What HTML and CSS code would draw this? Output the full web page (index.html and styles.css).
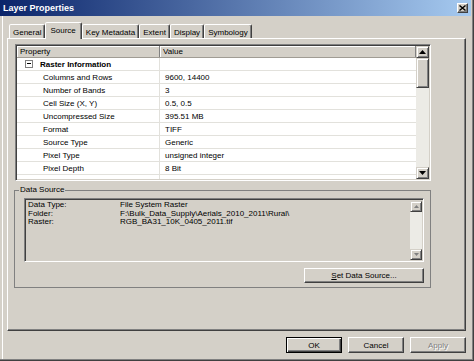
FILE: index.html
```html
<!DOCTYPE html>
<html>
<head>
<meta charset="utf-8">
<link rel="stylesheet" href="styles.css">
</head>
<body>
<div class="window">
  <div class="titlebar">
    <span class="title">Layer Properties</span>
    <span class="close"><svg width="7" height="6" viewBox="0 0 7 6"><path d="M0.5 0.5 L6.5 5.5 M6.5 0.5 L0.5 5.5" stroke="#000" stroke-width="1.4"/></svg></span>
  </div>
  <div class="content">
    <div class="tabs">
      <div class="tab">General</div>
      <div class="tab active">Source</div>
      <div class="tab">Key Metadata</div>
      <div class="tab">Extent</div>
      <div class="tab">Display</div>
      <div class="tab">Symbology</div>
    </div>
    <div class="panel">
      <div class="grid">
        <div class="grid-main">
          <div class="grow head"><div class="c1">Property</div><div class="c2">Value</div></div>
          <div class="grow group"><div class="c1"><span class="minus"></span><b>Raster Information</b></div><div class="c2"></div></div>
          <div class="grow"><div class="c1">Columns and Rows</div><div class="c2">9600, 14400</div></div>
          <div class="grow"><div class="c1">Number of Bands</div><div class="c2">3</div></div>
          <div class="grow"><div class="c1">Cell Size (X, Y)</div><div class="c2">0.5, 0.5</div></div>
          <div class="grow"><div class="c1">Uncompressed Size</div><div class="c2">395.51 MB</div></div>
          <div class="grow"><div class="c1">Format</div><div class="c2">TIFF</div></div>
          <div class="grow"><div class="c1">Source Type</div><div class="c2">Generic</div></div>
          <div class="grow"><div class="c1">Pixel Type</div><div class="c2">unsigned integer</div></div>
          <div class="grow"><div class="c1">Pixel Depth</div><div class="c2">8 Bit</div></div>
          <div class="grow"><div class="c1">NoData Value</div><div class="c2"></div></div>
        </div>
        <div class="vscroll">
          <div class="sbtn"><svg width="7" height="4" viewBox="0 0 7 4"><path d="M3.5 0 L7 4 L0 4 Z" fill="#000"/></svg></div>
          <div class="thumb"></div>
          <div class="track"></div>
          <div class="sbtn"><svg width="7" height="4" viewBox="0 0 7 4"><path d="M0 0 L7 0 L3.5 4 Z" fill="#000"/></svg></div>
        </div>
      </div>
      <fieldset class="groupbox">
        <legend>Data Source</legend>
        <div class="textbox">
          <div class="tb-text">
            <div class="tb-row"><span class="tb-label">Data Type:</span><span>File System Raster</span></div>
            <div class="tb-row"><span class="tb-label">Folder:</span><span>F:\Bulk_Data_Supply\Aerials_2010_2011\Rural\</span></div>
            <div class="tb-row"><span class="tb-label">Raster:</span><span>RGB_BA31_10K_0405_2011.tif</span></div>
          </div>
          <div class="vscroll small">
            <div class="sbtn"><svg width="5" height="3" viewBox="0 0 5 3"><path d="M2.5 0 L5 3 L0 3 Z" fill="#808080"/></svg></div>
            <div class="track"></div>
            <div class="sbtn"><svg width="5" height="3" viewBox="0 0 5 3"><path d="M0 0 L5 0 L2.5 3 Z" fill="#808080"/></svg></div>
          </div>
        </div>
        <div class="gb-actions">
          <button class="btn wide"><u>S</u>et Data Source...</button>
        </div>
      </fieldset>
    </div>
    <div class="footer">
      <button class="btn default">OK</button>
      <button class="btn">Cancel</button>
      <button class="btn" disabled>Apply</button>
    </div>
  </div>
</div>
</body>
</html>
```
FILE: styles.css
```css
* { box-sizing: border-box; }
body {
  margin: 0;
  font-family: "Liberation Sans", Arial, sans-serif;
  font-size: 8px;
  color: #000;
  background: #d4d0c8;
}
.window {
  width: 474px;
  height: 361px;
  background: #d4d0c8;
  display: flex;
  flex-direction: column;
  border-right: 1px solid #404040;
  border-bottom: 1px solid #404040;
  box-shadow: inset -1px -1px #808080, inset 2px 0 #d4d0c8, inset 3px 0 #fff;
  padding: 0 2px 2px 0;
  overflow: hidden;
}
.titlebar {
  height: 16px;
  flex: none;
  background: linear-gradient(to right, #0a246a, #a6caf0);
  color: #fff;
  font-weight: bold;
  font-size: 9px;
  display: flex;
  align-items: center;
  justify-content: space-between;
  padding: 0 3px 0 3px;
}
.close {
  width: 11px;
  height: 10px;
  background: #d4d0c8;
  border: 1px solid;
  border-color: #fff #404040 #404040 #fff;
  box-shadow: inset -1px -1px #808080;
  display: flex;
  align-items: center;
  justify-content: center;
}
.close svg { display: block; }
.content {
  flex: 1;
  display: flex;
  flex-direction: column;
  padding: 0 5px 0 7px;
}
.tabs {
  display: flex;
  align-items: flex-end;
  height: 16px;
  margin-top: 6px;
  padding-left: 2px;
  position: relative;
  z-index: 1;
}
.tab {
  height: 14px;
  padding: 1px 3px 0;
  border: 1px solid;
  border-bottom: none;
  border-color: #fff #404040 transparent #fff;
  box-shadow: inset -1px 0 #808080;
  border-radius: 2px 2px 0 0;
  display: flex;
  align-items: center;
  white-space: nowrap;
  background: #d4d0c8;
}
.tab.active {
  height: 17px;
  margin-bottom: -1px;
  padding: 0 5px 1px 4px;
}
.panel {
  height: 293px;
  flex: none;
  border: 1px solid;
  border-color: #fff #404040 #404040 #fff;
  box-shadow: inset -1px -1px #808080;
  padding: 5px 7px 0 6px;
  display: flex;
  flex-direction: column;
}
.grid {
  width: 416px;
  height: 137px;
  margin-left: 1px;
  border: 1px solid;
  border-color: #808080 #fff #fff #808080;
  box-shadow: inset 1px 1px #404040, inset -1px -1px #d4d0c8;
  padding: 1px;
  display: flex;
  background: #fff;
}
.grid-main {
  flex: 1;
  overflow: hidden;
}
.grow {
  display: flex;
  height: 13px;
  border-bottom: 1px solid #e2e1dc;
  white-space: nowrap;
}
.grow .c1 {
  width: 143px;
  flex: none;
  border-right: 1px solid #e2e1dc;
  padding-left: 26px;
  display: flex;
  align-items: center;
}
.grow .c2 {
  flex: 1;
  padding-left: 5px;
  display: flex;
  align-items: center;
}
.grow.head {
  height: 12px;
  background: #d4d0c8;
  border-bottom: 1px solid #a09c94;
}
.grow.head .c1, .grow.head .c2 {
  box-shadow: inset 1px 1px #fff;
  border-right: 1px solid #808080;
}
.grow.head .c1 { padding-left: 3px; }
.grow.head .c2 { padding-left: 3px; }
.grow.group .c1 { padding-left: 8px; }
.minus {
  width: 8px;
  height: 8px;
  border: 1px solid #808080;
  background: #fff;
  margin-right: 7px;
  position: relative;
  flex: none;
}
.minus::after {
  content: "";
  position: absolute;
  left: 1px;
  right: 1px;
  top: 2px;
  height: 1px;
  background: #000;
}
.vscroll {
  width: 13px;
  flex: none;
  display: flex;
  flex-direction: column;
  background: #ecebe6;
}
.sbtn, .thumb {
  height: 12px;
  flex: none;
  background: #d4d0c8;
  border: 1px solid;
  border-color: #d4d0c8 #404040 #404040 #d4d0c8;
  box-shadow: inset 1px 1px #fff, inset -1px -1px #808080;
  display: flex;
  align-items: center;
  justify-content: center;
}
.sbtn svg { display: block; }
.thumb { height: 30px; }
.track { flex: 1; }
.groupbox {
  width: 417px;
  margin: 4px 0 0 0;
  padding: 3px 6px 4px 9px;
  border: 1px solid #808080;
  min-width: 0;
}
.groupbox legend {
  padding: 0 1px;
  margin-left: -5px;
  line-height: 10px;
}
.textbox {
  width: 400px;
  height: 64px;
  border: 1px solid;
  border-color: #808080 #fff #fff #808080;
  box-shadow: inset 1px 1px #404040, inset -1px -1px #d4d0c8;
  padding: 1px;
  display: flex;
  background: #d4d0c8;
}
.tb-text {
  flex: 1;
  padding: 1px 0 0 2px;
  line-height: 8.5px;
}
.tb-row { display: flex; white-space: nowrap; }
.tb-label { width: 92px; flex: none; }
.vscroll.small {
  width: 12px;
  margin-top: 1px;
}
.vscroll.small .sbtn { height: 11px; }
.gb-actions {
  display: flex;
  justify-content: flex-end;
  margin-top: 6px;
  width: 400px;
}
.btn {
  font-family: "Liberation Sans", Arial, sans-serif;
  font-size: 8px;
  color: #000;
  height: 16px;
  width: 56px;
  padding: 0;
  background: #d4d0c8;
  border: 1px solid;
  border-color: #fff #404040 #404040 #fff;
  box-shadow: inset -1px -1px #808080;
  display: flex;
  align-items: center;
  justify-content: center;
}
.btn.wide { width: 120px; height: 15px; }
.btn.default {
  border: 1px solid #000;
  box-shadow: inset 1px 1px #fff, inset -1px -1px #404040, inset -2px -2px #808080;
}
.btn:disabled {
  color: #808080;
  text-shadow: 1px 1px #fff;
}
.footer {
  display: flex;
  justify-content: flex-end;
  gap: 6px;
  margin-top: 6px;
}
```
